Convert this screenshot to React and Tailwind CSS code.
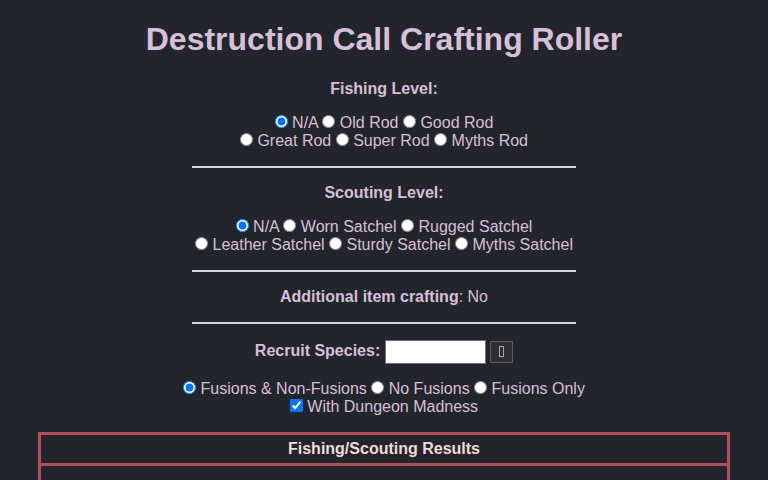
const fishing = [
  ["N/A", "Old Rod", "Good Rod"],
  ["Great Rod", "Super Rod", "Myths Rod"],
]

const scouting = [
  ["N/A", "Worn Satchel", "Rugged Satchel"],
  ["Leather Satchel", "Sturdy Satchel", "Myths Satchel"],
]

function Radio({ name, checked }) {
  return <input type="radio" name={name} defaultChecked={checked} className="m-0" />
}

function RadioRows({ name, rows }) {
  return (
    <p className="my-4">
      {rows.map((row, r) => (
        <span key={r}>
          {row.map((label, i) => (
            <span key={label}>
              <Radio name={name} checked={r === 0 && i === 0} /> {label}
              {i < row.length - 1 && " "}
            </span>
          ))}
          {r < rows.length - 1 && <br />}
        </span>
      ))}
    </p>
  )
}

function Rule() {
  return <hr className="mx-auto my-4 w-1/2 h-0 border-t-2 border-[#d4d4d4]" />
}

export default function App() {
  return (
    <div className="min-h-screen bg-[#22262c] text-[#d8bfd8] text-center font-['Liberation_Sans',Arial,sans-serif] text-[16px] leading-[normal] overflow-hidden">
      <div className="flow-root">
        <h1 className="my-[21.44px] text-[32px] font-bold">Destruction Call Crafting Roller</h1>

        <p className="my-4 font-bold">Fishing Level:</p>
        <RadioRows name="fishing" rows={fishing} />
        <Rule />

        <p className="my-4 font-bold">Scouting Level:</p>
        <RadioRows name="scouting" rows={scouting} />
        <Rule />

        <p className="my-4">
          <b>Additional item crafting</b>: No
        </p>
        <Rule />

        <p className="my-4">
          <b>Recruit Species:</b>{" "}
          <input
            type="text"
            className="w-[101px] h-[24px] bg-white border border-[#6e6e6e] align-middle text-black"
          />{" "}
          <button className="inline-flex items-center justify-center w-[23px] h-[22px] bg-[#2e3034] border border-[#5c5c5c] align-middle">
            <span className="block w-[5px] h-[11px] border border-[#a8a8a8]" />
          </button>
        </p>

        <p className="my-4">
          <Radio name="fusions" checked /> Fusions &amp; Non-Fusions{" "}
          <Radio name="fusions" /> No Fusions{" "}
          <Radio name="fusions" /> Fusions Only
          <br />
          <input type="checkbox" defaultChecked className="m-0" /> With Dungeon Madness
        </p>

        <table className="mx-auto w-[90%] border-collapse border-[3px] border-[#b34f5a]">
          <thead>
            <tr>
              <th className="border-[3px] border-[#b34f5a] py-[5px] font-bold text-[#f2dada]">
                Fishing/Scouting Results
              </th>
            </tr>
          </thead>
          <tbody>
            <tr>
              <td className="border-[3px] border-[#b34f5a] h-[60px]"></td>
            </tr>
          </tbody>
        </table>
      </div>
    </div>
  )
}
